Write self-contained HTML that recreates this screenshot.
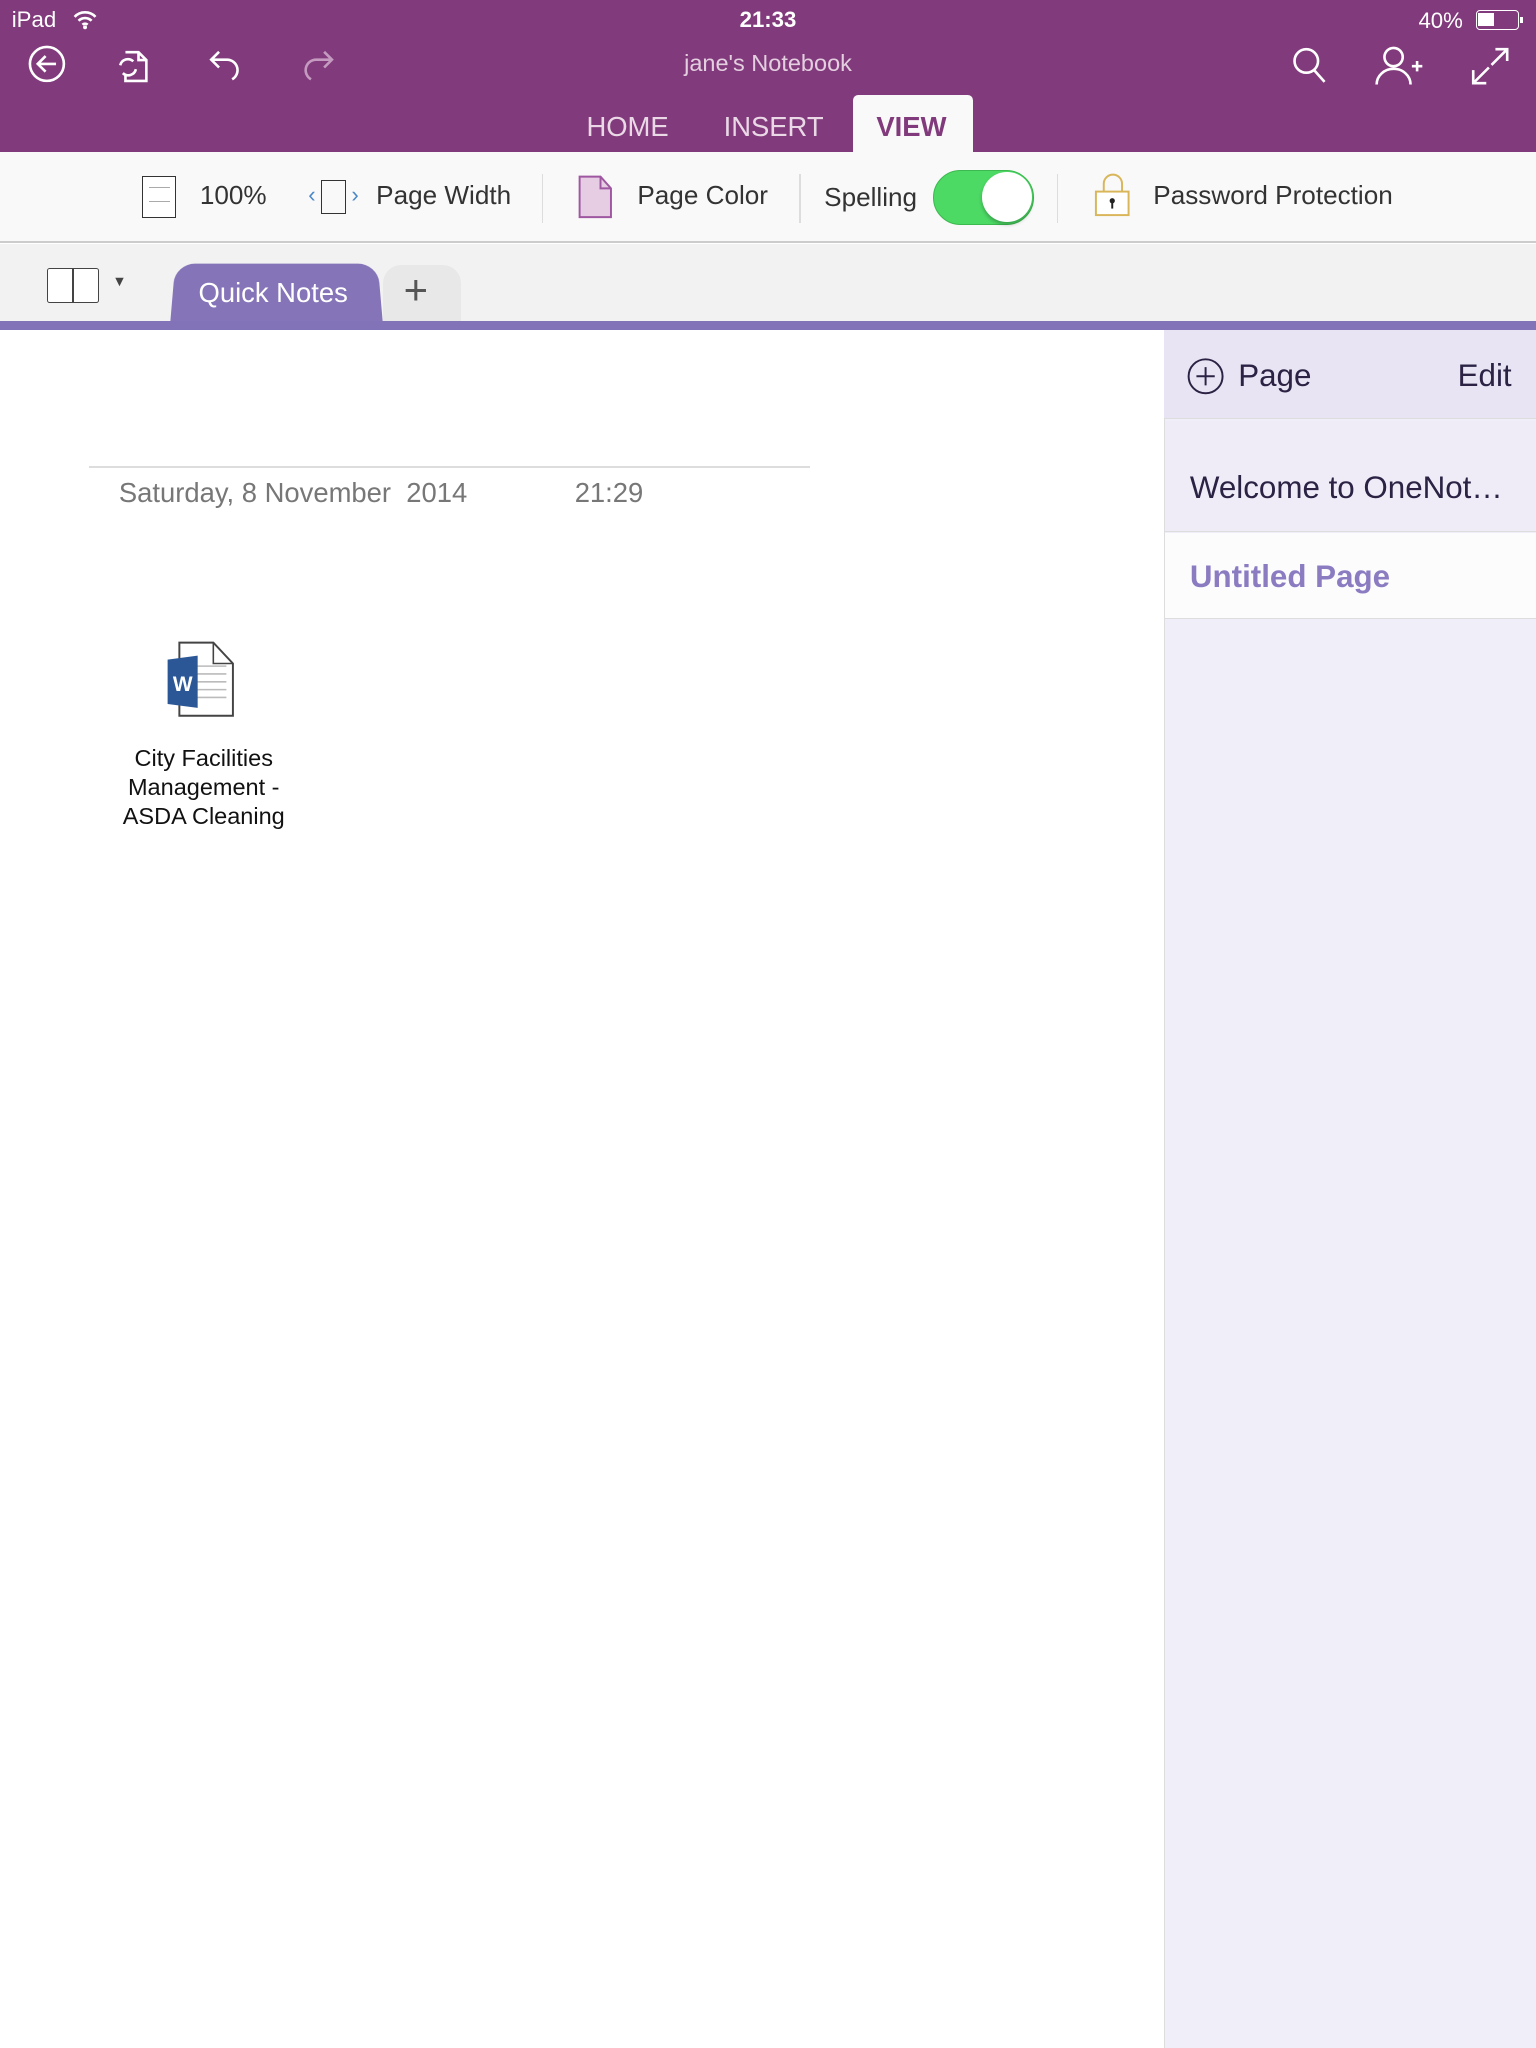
<!DOCTYPE html>
<html><head><meta charset="utf-8"><style>
*{margin:0;padding:0;box-sizing:border-box}
html,body{width:1536px;height:2048px;overflow:hidden;background:#fff}
#w{width:1176px;height:1568px;zoom:1.306122;position:relative;font-family:"Liberation Sans",sans-serif;background:#fff}
.a{position:absolute;white-space:nowrap}
</style></head><body><div id="w">
<div class="a" style="left:0;top:0;width:1176px;height:116px;background:#813a7b"></div>
<div class="a" style="left:9px;top:5px;font-size:17px;color:#fff">iPad</div>
<svg class="a" style="left:55px;top:7px" width="20" height="16" viewBox="0 0 20 16"><path d="M2 6a11 11 0 0 1 16 0M5 9a7 7 0 0 1 10 0M8 12a3 3 0 0 1 4 0" stroke="#fff" stroke-width="2" fill="none"/><circle cx="10" cy="14" r="1.5" fill="#fff"/></svg>
<div class="a" style="left:0;width:1176px;text-align:center;top:5px;font-size:17px;font-weight:bold;color:#fff">21:33</div>
<div class="a" style="left:1086px;top:6px;font-size:17px;color:#fff">40%</div>
<div class="a" style="left:1130px;top:8px;width:33px;height:15px;border:1.5px solid #fff;border-radius:3px"><div style="width:12px;height:10px;margin:1px;background:#fff"></div></div>
<div class="a" style="left:1164px;top:13px;width:2px;height:5px;background:#fff"></div>
<svg class="a" style="left:20px;top:33px" width="32" height="32"><circle cx="16" cy="16" r="13" stroke="#fff" stroke-width="2" fill="none"/><path d="M23 16H9M15 10l-6 6 6 6" stroke="#fff" stroke-width="2" fill="none"/></svg>
<svg class="a" style="left:88px;top:36px" width="30" height="30"><path d="M8 4h10l6 6v16H8v-4M18 4v6h6" stroke="#fff" stroke-width="2" fill="none"/><path d="M4 14a6 6 0 0 1 10-3M16 17a6 6 0 0 1-10 3" stroke="#fff" stroke-width="2" fill="none"/></svg>
<svg class="a" style="left:158px;top:34px" width="32" height="32"><path d="M10 6L4 12l6 6M4 12h12a8 8 0 0 1 4 15" stroke="#fff" stroke-width="2" fill="none"/></svg>
<svg class="a" style="left:228px;top:34px" width="32" height="32"><path d="M20 6l6 6-6 6M26 12H14a8 8 0 0 0-4 15" stroke="#c59ac0" stroke-width="2" fill="none"/></svg>
<div class="a" style="left:0;width:1176px;text-align:center;top:38px;font-size:18px;color:#e3cfe0">jane's Notebook</div>
<svg class="a" style="left:986px;top:34px" width="32" height="32"><circle cx="14" cy="13" r="9" stroke="#fff" stroke-width="2" fill="none"/><path d="M20 20l8 9" stroke="#fff" stroke-width="2"/></svg>
<svg class="a" style="left:1052px;top:34px" width="40" height="34"><circle cx="15" cy="10" r="7" stroke="#fff" stroke-width="2" fill="none"/><path d="M2 31a13 12 0 0 1 26 0" stroke="#fff" stroke-width="2" fill="none"/><path d="M29 17h8M33 13v8" stroke="#fff" stroke-width="2"/></svg>
<svg class="a" style="left:1124px;top:34px" width="34" height="34"><path d="M18 16L29 5M21 4h9v9M16 18L5 29M4 20v10h10" stroke="#fff" stroke-width="2" fill="none"/></svg>
<div class="a" style="left:449px;top:85px;font-size:21px;color:#ead8e7">HOME</div>
<div class="a" style="left:554px;top:85px;font-size:21px;color:#ead8e7">INSERT</div>
<div class="a" style="left:653px;top:73px;width:92px;height:44px;background:#f9f9f9;border-radius:4px 4px 0 0"></div>
<div class="a" style="left:671px;top:85px;font-size:21px;font-weight:bold;color:#813a7b">VIEW</div>
<div class="a" style="left:0;top:116px;width:1176px;height:70px;background:#f9f9f9;border-bottom:2px solid #ccc"></div>
<div class="a" style="left:109px;top:135px;width:26px;height:32px;border:1.5px solid #333;background:#fff"></div>
<div class="a" style="left:114px;top:143px;width:16px;height:12px;border-top:1.5px solid #aaa;border-bottom:1.5px solid #aaa"></div>
<div class="a" style="left:153px;top:138px;font-size:20px;color:#333">100%</div>
<div class="a" style="left:246px;top:138px;width:19px;height:26px;border:1.5px solid #333"></div>
<div class="a" style="left:236px;top:139px;font-size:17px;color:#4a87c7">‹</div><div class="a" style="left:269px;top:139px;font-size:17px;color:#4a87c7">›</div>
<div class="a" style="left:288px;top:138px;font-size:20px;color:#333">Page Width</div>
<div class="a" style="left:415px;top:133px;width:1px;height:38px;background:#ddd"></div>
<svg class="a" style="left:442px;top:133px" width="30" height="36"><path d="M2 2h16l8 9v22H2z" fill="#e6cde3" stroke="#9e57a0" stroke-width="1.5"/><path d="M18 2v9h8" fill="none" stroke="#9e57a0" stroke-width="1.5"/></svg>
<div class="a" style="left:488px;top:138px;font-size:20px;color:#333">Page Color</div>
<div class="a" style="left:612px;top:133px;width:1px;height:38px;background:#ddd"></div>
<div class="a" style="left:631px;top:139px;font-size:20px;color:#333">Spelling</div>
<div class="a" style="left:714px;top:130px;width:78px;height:42px;border-radius:21px;background:#4cd964;border:1px solid #3cb94f"></div>
<div class="a" style="left:752px;top:132px;width:38px;height:38px;border-radius:50%;background:#fff;box-shadow:0 2px 3px rgba(0,0,0,.25)"></div>
<div class="a" style="left:809px;top:133px;width:1px;height:38px;background:#ddd"></div>
<svg class="a" style="left:836px;top:132px" width="32" height="36"><path d="M9 15V9a7 7 0 0 1 14 0v6" stroke="#d9b65a" stroke-width="1.5" fill="none"/><rect x="3" y="15" width="25" height="18" fill="#fff" stroke="#d9b65a" stroke-width="1.5"/><circle cx="15.5" cy="22" r="2" fill="#222"/><path d="M15.5 23v5" stroke="#222" stroke-width="1.5"/></svg>
<div class="a" style="left:883px;top:138px;font-size:20px;color:#333">Password Protection</div>
<div class="a" style="left:0;top:187px;width:1176px;height:59px;background:#f2f2f2"></div>
<div class="a" style="left:36px;top:205px;width:40px;height:27px;border:1.5px solid #444;border-radius:2px;background:#fff"></div>
<div class="a" style="left:55px;top:205px;width:1.5px;height:27px;background:#444"></div>
<div class="a" style="left:86px;top:210px;font-size:11px;color:#444">▼</div>
<div class="a" style="left:293px;top:203px;width:60px;height:45px;background:#e8e8e8;border-radius:14px 14px 0 0"></div>
<div class="a" style="left:309px;top:204px;font-size:32px;color:#555;font-weight:300">+</div>
<div class="a" style="left:130px;top:199px;width:163px;height:50px;background:#8574b8;border-radius:16px 16px 0 0;transform:perspective(100px) rotateX(6deg);transform-origin:bottom"></div>
<div class="a" style="left:152px;top:212px;font-size:21px;color:#fff">Quick Notes</div>
<div class="a" style="left:0;top:246px;width:1176px;height:7px;background:#8272b8"></div>
<div class="a" style="left:891px;top:253px;width:285px;height:1315px;background:#f0eef8;border-left:1px solid #ddd"></div>
<div class="a" style="left:891px;top:253px;width:285px;height:68px;background:#e8e4f3;border-bottom:1px solid #ddd"></div>
<svg class="a" style="left:908px;top:274px" width="30" height="30"><circle cx="15" cy="14" r="13" stroke="#2b2244" stroke-width="1.5" fill="none"/><path d="M8 14h14M15 7v14" stroke="#2b2244" stroke-width="1.5"/></svg>
<div class="a" style="left:948px;top:274px;font-size:24px;color:#2b2244">Page</div>
<div class="a" style="left:1116px;top:274px;font-size:24px;color:#2b2244">Edit</div>
<div class="a" style="left:892px;top:322px;width:284px;height:85px;background:#efecf8;border-bottom:1px solid #ddd"></div>
<div class="a" style="left:911px;top:360px;font-size:24px;color:#2b2244">Welcome to OneNot…</div>
<div class="a" style="left:892px;top:408px;width:284px;height:66px;background:#fcfcfd;border-bottom:1px solid #ddd"></div>
<div class="a" style="left:911px;top:428px;font-size:24px;font-weight:bold;color:#8b7cc2">Untitled Page</div>
<div class="a" style="left:68px;top:357px;width:552px;height:1.5px;background:#ddd"></div>
<div class="a" style="left:91px;top:365px;font-size:21px;color:#777">Saturday, 8 November&nbsp; 2014</div>
<div class="a" style="left:440px;top:365px;font-size:21px;color:#777">21:29</div>
<svg class="a" style="left:126px;top:490px" width="60" height="62"><path d="M11 2h26l15 16v40H11z" fill="#fff" stroke="#444" stroke-width="1.5"/><path d="M37 2v16h15" fill="none" stroke="#444" stroke-width="1.2"/><path d="M22 20h25M22 26h25M22 32h25M22 38h25M22 44h25" stroke="#bbb" stroke-width="1.2"/><path d="M2 15l23-3v40L2 49z" fill="#2b5797"/><text x="6" y="39" font-family="Liberation Sans" font-weight="bold" font-size="16" fill="#fff">W</text></svg>
<div class="a" style="left:56px;width:200px;top:570px;text-align:center;font-size:18px;line-height:22px;color:#111;white-space:normal">City Facilities<br>Management -<br>ASDA Cleaning</div>
</div></body></html>
